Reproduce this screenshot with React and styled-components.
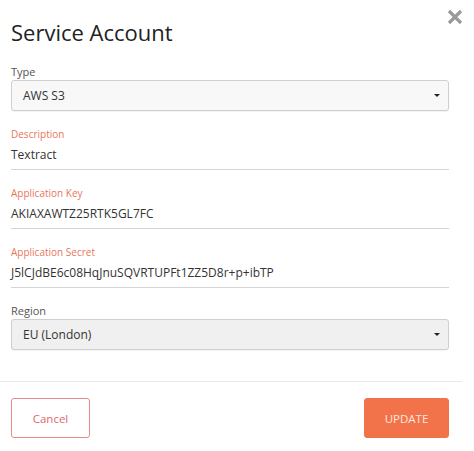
import React from "react";
import styled, { createGlobalStyle } from "styled-components";

const Global = createGlobalStyle`
  body {
    margin: 0;
    background: #fff;
    font-family: "Open Sans", "Noto Sans", sans-serif;
  }
`;

const Modal = styled.div`
  position: relative;
  width: 462px;
  background: #fff;
`;

const Body = styled.div`
  padding: 16px 13px 0 11px;
`;

const Title = styled.h1`
  margin: 0 0 16px;
  font-size: 22px;
  font-weight: 400;
  color: #222;
  line-height: 32px;
`;

const Close = styled.button`
  position: absolute;
  top: 6px;
  right: -4px;
  width: 22px;
  height: 22px;
  padding: 0;
  border: none;
  background: none;
  cursor: pointer;
  display: flex;
  align-items: center;
  justify-content: center;
`;

const Field = styled.div`
  display: flex;
  flex-direction: column;
  margin-bottom: ${(p) => (p.$mb ?? 16)}px;
`;

const Label = styled.label`
  font-size: ${(p) => (p.$accent ? 10 : 11)}px;
  line-height: 15px;
  color: ${(p) => (p.$accent ? "#e9765c" : "#555")};
  margin-bottom: ${(p) => (p.$accent ? 4 : 1)}px;
`;

const SelectBox = styled.div`
  height: 29px;
  border: 1px solid #cfcfcf;
  border-radius: 3px;
  background: ${(p) => (p.$dark ? "#f0f0f0" : "#f8f8f8")};
  display: flex;
  align-items: center;
  justify-content: space-between;
  padding: 0 8px 0 11px;
  font-size: 12px;
  color: #333;
  box-shadow: 0 1px 1px rgba(0, 0, 0, 0.05);
`;

const Caret = styled.span`
  width: 0;
  height: 0;
  border-left: 3px solid transparent;
  border-right: 3px solid transparent;
  border-top: 3px solid #222;
`;

const Input = styled.div`
  font-size: 12px;
  line-height: 18px;
  color: #333;
  padding-bottom: 5px;
  border-bottom: 1px solid #d4d4d4;
`;

const Footer = styled.div`
  margin-top: 31px;
  border-top: 1px solid #e8e8e8;
  padding: 16px 13px 0 11px;
  display: flex;
  justify-content: space-between;
`;

const Button = styled.button`
  height: 40px;
  width: ${(p) => p.$w}px;
  border-radius: 3px;
  font-family: inherit;
  font-size: 11.5px;
  cursor: pointer;
  border: 1px solid ${(p) => (p.$primary ? "#f2734a" : "#e98a8a")};
  background: ${(p) => (p.$primary ? "#f2734a" : "#fff")};
  color: ${(p) => (p.$primary ? "#fde8df" : "#e06a6a")};
`;

export default function App() {
  return (
    <>
      <Global />
      <Modal>
        <Body>
          <Close aria-label="close">
            <svg width="16" height="16" viewBox="0 0 16 16">
              <path d="M2 2 L14 14 M14 2 L2 14" stroke="#9a9a9a" strokeWidth="3.2" />
            </svg>
          </Close>
          <Title>Service Account</Title>
          <Field>
            <Label>Type</Label>
            <SelectBox>
              AWS S3
              <Caret />
            </SelectBox>
          </Field>
          <Field>
            <Label $accent>Description</Label>
            <Input>Textract</Input>
          </Field>
          <Field>
            <Label $accent>Application Key</Label>
            <Input>AKIAXAWTZ25RTK5GL7FC</Input>
          </Field>
          <Field $mb={15}>
            <Label $accent>Application Secret</Label>
            <Input>J5lCJdBE6c08HqJnuSQVRTUPFt1ZZ5D8r+p+ibTP</Input>
          </Field>
          <Field $mb={0}>
            <Label>Region</Label>
            <SelectBox $dark>
              EU (London)
              <Caret />
            </SelectBox>
          </Field>
        </Body>
        <Footer>
          <Button $w={79}>Cancel</Button>
          <Button $w={85} $primary>UPDATE</Button>
        </Footer>
      </Modal>
    </>
  );
}
